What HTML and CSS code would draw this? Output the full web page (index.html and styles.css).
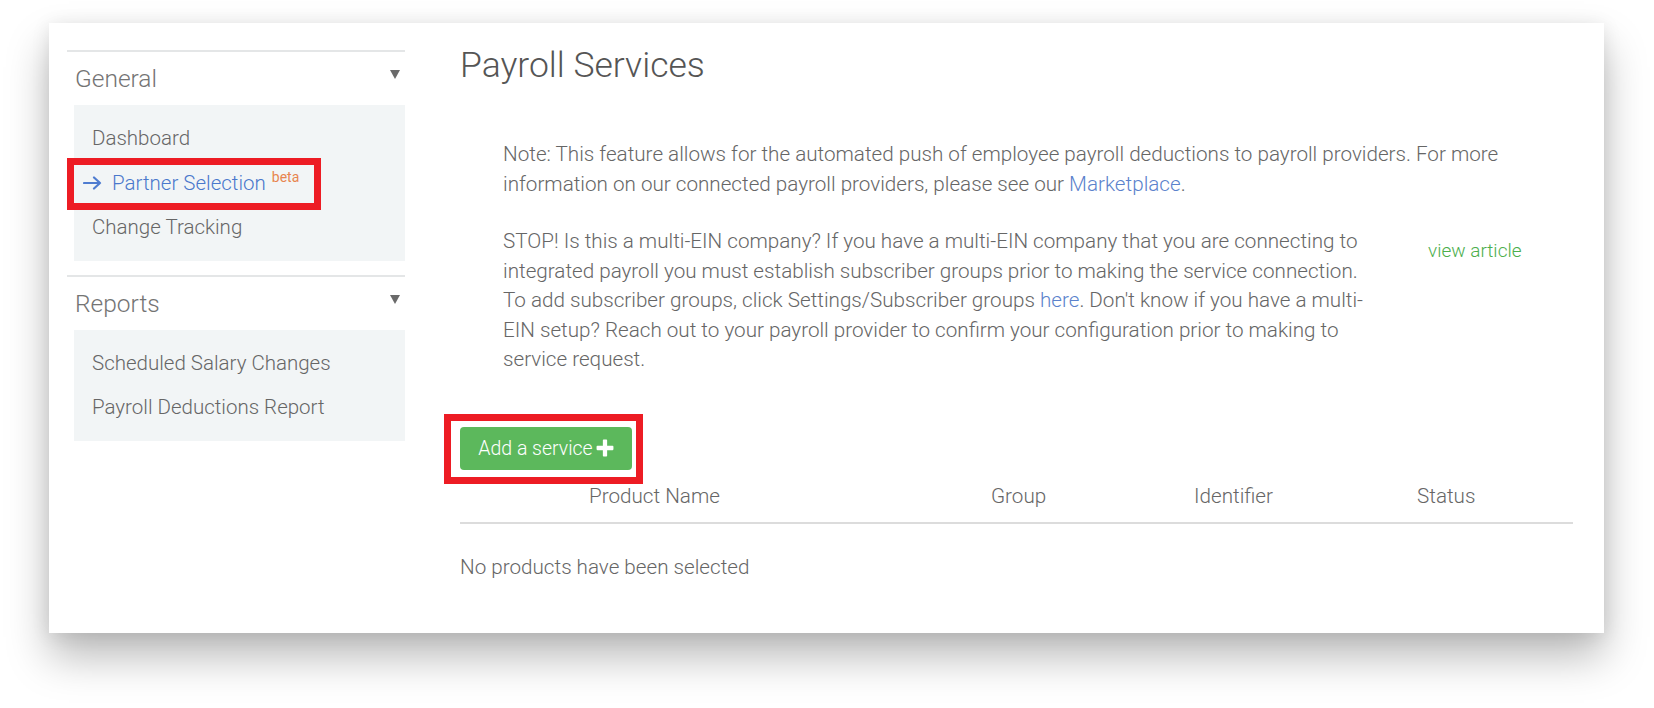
FILE: index.html
```html
<!DOCTYPE html>
<html lang="en">
<head>
<meta charset="utf-8">
<title>Payroll Services</title>
<link rel="stylesheet" href="styles.css">
</head>
<body>
<div class="card">
  <aside class="sidebar">
    <section class="nav-section">
      <div class="nav-head"><span>General</span><span class="caret"></span></div>
      <ul class="nav-list">
        <li class="nav-item">Dashboard</li>
        <li class="nav-item active">
          <svg class="arrow" width="19" height="14" viewBox="0 0 19 14"><path d="M1 7H17M11 1.5L17 7L11 12.5" fill="none" stroke="#4f7cd0" stroke-width="2.2" stroke-linecap="round" stroke-linejoin="round"/></svg>
          <span class="nav-link">Partner Selection</span><sup class="beta">beta</sup>
          <span class="callout callout-nav"></span>
        </li>
        <li class="nav-item">Change Tracking</li>
      </ul>
    </section>
    <section class="nav-section">
      <div class="nav-head"><span>Reports</span><span class="caret"></span></div>
      <ul class="nav-list">
        <li class="nav-item">Scheduled Salary Changes</li>
        <li class="nav-item">Payroll Deductions Report</li>
      </ul>
    </section>
  </aside>
  <main class="content">
    <h1 class="title">Payroll Services</h1>
    <div class="notes">
      <p class="note">Note: This feature allows for the automated push of employee payroll deductions to payroll providers. For more information on our connected payroll providers, please see our <a class="link">Marketplace</a>.</p>
      <div class="stop-row">
        <p class="note stop">STOP! Is this a multi-EIN company? If you have a multi-EIN company that you are connecting to integrated payroll you must establish subscriber groups prior to making the service connection. To add subscriber groups, click Settings/Subscriber groups <a class="link">here</a>. Don't know if you have a multi-EIN setup? Reach out to your payroll provider to confirm your configuration prior to making to service request.</p>
        <a class="view-article">view article</a>
      </div>
    </div>
    <div class="btn-wrap">
      <button class="btn-add">Add a service<svg class="plus" width="18" height="18" viewBox="0 0 16 16"><path d="M6.1 1.2Q6.1 0.5 6.8 0.5H9.2Q9.9 0.5 9.9 1.2V6.1H14.8Q15.5 6.1 15.5 6.8V9.2Q15.5 9.9 14.8 9.9H9.9V14.8Q9.9 15.5 9.2 15.5H6.8Q6.1 15.5 6.1 14.8V9.9H1.2Q0.5 9.9 0.5 9.2V6.8Q0.5 6.1 1.2 6.1H6.1z" fill="#fff"/></svg></button>
      <span class="callout callout-btn"></span>
    </div>
    <div class="table">
      <div class="thead">
        <span></span>
        <span>Product Name</span>
        <span>Group</span>
        <span>Identifier</span>
        <span>Status</span>
      </div>
      <div class="empty">No products have been selected</div>
    </div>
  </main>
</div>
</body>
</html>
```

FILE: styles.css
```css
html, body {
  margin: 0;
  padding: 0;
  background: #ffffff;
}

body {
  font-family: Roboto, "Noto Sans", "Liberation Sans", sans-serif;
  color: #6e6e6e;
  padding: 23px 0 75px 49px;
  min-height: 708px;
  box-sizing: border-box;
}

.card {
  width: 1555px;
  height: 610px;
  box-sizing: border-box;
  background: #ffffff;
  display: flex;
  gap: 55px;
  padding: 27px 31px 0 18px;
  box-shadow: 0 24px 40px rgba(0, 0, 0, 0.27), 0 2px 18px rgba(0, 0, 0, 0.09);
}

/* ---------- Sidebar ---------- */
.sidebar {
  width: 338px;
  flex: none;
}

.nav-section {
  border-top: 2px solid #e4e6e7;
}

.nav-head {
  height: 53px;
  display: flex;
  align-items: center;
  justify-content: space-between;
  padding: 0 5px 0 8px;
  font-size: 24.5px;
  font-weight: 300;
  color: #747474;
}

.caret {
  width: 0;
  height: 0;
  border-left: 5.5px solid transparent;
  border-right: 5.5px solid transparent;
  border-top: 9px solid #6a6a6a;
  margin-top: -8px;
}

.nav-list {
  list-style: none;
  margin: 0 0 14px 7px;
  padding: 11px 0;
  background: #f2f5f6;
}

.nav-item {
  position: relative;
  height: 44.5px;
  display: flex;
  align-items: center;
  padding-left: 18px;
  font-size: 20.5px;
  font-weight: 300;
  color: #666666;
}

.nav-item.active {
  padding-left: 9px;
}

.arrow {
  margin-right: 10px;
  flex: none;
}

.nav-link {
  color: #4a78cc;
}

.beta {
  font-size: 14px;
  font-weight: 400;
  color: #e8854f;
  margin-left: 6px;
  align-self: flex-start;
  margin-top: 8px;
}

.callout {
  position: absolute;
  border: 7px solid #ed1c24;
  box-sizing: border-box;
  pointer-events: none;
}

.callout-nav {
  left: -7px;
  top: -3px;
  width: 254px;
  height: 52px;
}

/* ---------- Content ---------- */
.content {
  flex: 1;
  min-width: 0;
}

.title {
  margin: 0;
  font-size: 35.5px;
  font-weight: 300;
  line-height: 30px;
  color: #555555;
}

.notes {
  margin-top: 60px;
  padding: 0 30px 0 43px;
  display: flex;
  flex-direction: column;
  gap: 28px;
}

.note {
  margin: 0;
  font-size: 20.65px;
  font-weight: 300;
  line-height: 29.5px;
  color: #666666;
}

.link {
  color: #5b82cc;
}

.stop-row {
  display: flex;
  align-items: flex-start;
  gap: 55px;
}

.stop {
  width: 870px;
  flex: none;
}

.view-article {
  margin-top: 12px;
  font-size: 19px;
  font-weight: 300;
  color: #4cae4c;
}

.btn-wrap {
  position: relative;
  display: inline-block;
  margin-top: 52px;
}

.btn-add {
  display: flex;
  align-items: center;
  gap: 3px;
  height: 43px;
  width: 172px;
  justify-content: center;
  border: none;
  border-radius: 4px;
  background: #5cb85c;
  color: #ffffff;
  font-family: Roboto, "Noto Sans", "Liberation Sans", sans-serif;
  font-size: 19.5px;
  font-weight: 300;
  padding: 0;
}

.callout-btn {
  left: -16px;
  top: -13px;
  width: 199px;
  height: 70px;
}

.table {
  font-size: 20.65px;
  font-weight: 300;
  color: #666666;
}

.thead {
  display: grid;
  grid-template-columns: 129px 402px 203px 223px 1fr;
  height: 52px;
  align-items: center;
  border-bottom: 2px solid #dcdcdc;
}

.empty {
  margin-top: 31px;
  line-height: 24px;
}
```
